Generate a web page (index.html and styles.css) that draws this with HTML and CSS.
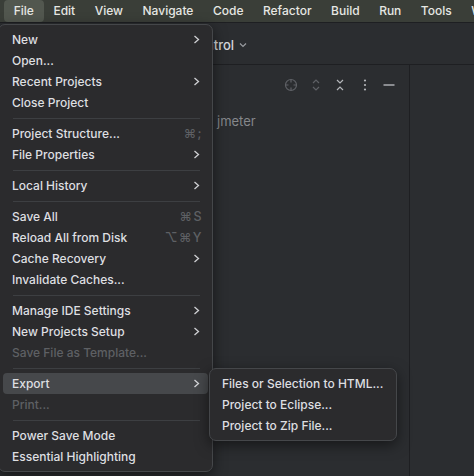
FILE: index.html
```html
<!DOCTYPE html>
<html>
<head>
<meta charset="utf-8">
<link rel="stylesheet" href="styles.css">
</head>
<body>
<div class="menubar">
  <span class="mb-item active">File</span>
  <span class="mb-item">Edit</span>
  <span class="mb-item">View</span>
  <span class="mb-item">Navigate</span>
  <span class="mb-item">Code</span>
  <span class="mb-item">Refactor</span>
  <span class="mb-item">Build</span>
  <span class="mb-item">Run</span>
  <span class="mb-item">Tools</span>
  <span class="mb-item">Window</span>
</div>
<div class="ide">
  <div class="toolbar">
    <span class="vcs">Version Control <svg class="chev-down" width="10" height="10" viewBox="0 0 10 10"><path d="M2 3.5 L5 6.5 L8 3.5" fill="none" stroke="#9a9ca0" stroke-width="1.2"/></svg></span>
  </div>
  <div class="panels">
    <div class="project">
      <div class="proj-head">
        <svg width="14" height="14" viewBox="0 0 14 14"><circle cx="7" cy="7" r="5.5" fill="none" stroke="#5f6166" stroke-width="1.2"/><path d="M7 1.5V4.5M7 9.5V12.5M1.5 7H4.5M9.5 7H12.5" stroke="#5f6166" stroke-width="1.2"/></svg>
        <svg width="14" height="14" viewBox="0 0 14 14"><path d="M4 5 L7 2 L10 5M4 9 L7 12 L10 9" fill="none" stroke="#5f6166" stroke-width="1.2"/></svg>
        <svg width="14" height="14" viewBox="0 0 14 14"><path d="M4 2 L7 5 L10 2M4 12 L7 9 L10 12" fill="none" stroke="#b4b6ba" stroke-width="1.2"/></svg>
        <svg width="14" height="14" viewBox="0 0 14 14"><circle cx="7" cy="2.5" r="1.1" fill="#b4b6ba"/><circle cx="7" cy="7" r="1.1" fill="#b4b6ba"/><circle cx="7" cy="11.5" r="1.1" fill="#b4b6ba"/></svg>
        <svg width="14" height="14" viewBox="0 0 14 14"><path d="M1.5 7H12.5" stroke="#b4b6ba" stroke-width="1.4"/></svg>
      </div>
      <div class="proj-row">jmeter</div>
    </div>
    <div class="side"></div>
  </div>
</div>

<div class="menu file-menu">
  <div class="mi"><span>New</span><svg class="arrow" width="7" height="9" viewBox="0 0 7 9"><path d="M1.5 1 L5.5 4.5 L1.5 8" fill="none" stroke="#cfd0d3" stroke-width="1.3"/></svg></div>
  <div class="mi"><span>Open...</span></div>
  <div class="mi"><span>Recent Projects</span><svg class="arrow" width="7" height="9" viewBox="0 0 7 9"><path d="M1.5 1 L5.5 4.5 L1.5 8" fill="none" stroke="#cfd0d3" stroke-width="1.3"/></svg></div>
  <div class="mi"><span>Close Project</span></div>
  <div class="sep"></div>
  <div class="mi"><span>Project Structure...</span><span class="sc">⌘;</span></div>
  <div class="mi"><span>File Properties</span><svg class="arrow" width="7" height="9" viewBox="0 0 7 9"><path d="M1.5 1 L5.5 4.5 L1.5 8" fill="none" stroke="#cfd0d3" stroke-width="1.3"/></svg></div>
  <div class="sep"></div>
  <div class="mi"><span>Local History</span><svg class="arrow" width="7" height="9" viewBox="0 0 7 9"><path d="M1.5 1 L5.5 4.5 L1.5 8" fill="none" stroke="#cfd0d3" stroke-width="1.3"/></svg></div>
  <div class="sep"></div>
  <div class="mi"><span>Save All</span><span class="sc">⌘S</span></div>
  <div class="mi"><span>Reload All from Disk</span><span class="sc">⌥⌘Y</span></div>
  <div class="mi"><span>Cache Recovery</span><svg class="arrow" width="7" height="9" viewBox="0 0 7 9"><path d="M1.5 1 L5.5 4.5 L1.5 8" fill="none" stroke="#cfd0d3" stroke-width="1.3"/></svg></div>
  <div class="mi"><span>Invalidate Caches...</span></div>
  <div class="sep"></div>
  <div class="mi"><span>Manage IDE Settings</span><svg class="arrow" width="7" height="9" viewBox="0 0 7 9"><path d="M1.5 1 L5.5 4.5 L1.5 8" fill="none" stroke="#cfd0d3" stroke-width="1.3"/></svg></div>
  <div class="mi"><span>New Projects Setup</span><svg class="arrow" width="7" height="9" viewBox="0 0 7 9"><path d="M1.5 1 L5.5 4.5 L1.5 8" fill="none" stroke="#cfd0d3" stroke-width="1.3"/></svg></div>
  <div class="mi disabled"><span>Save File as Template...</span></div>
  <div class="sep"></div>
  <div class="mi selected"><span>Export</span><svg class="arrow" width="7" height="9" viewBox="0 0 7 9"><path d="M1.5 1 L5.5 4.5 L1.5 8" fill="none" stroke="#d6d7da" stroke-width="1.3"/></svg></div>
  <div class="mi disabled"><span>Print...</span></div>
  <div class="sep"></div>
  <div class="mi"><span>Power Save Mode</span></div>
  <div class="mi"><span>Essential Highlighting</span></div>
</div>

<div class="menu sub-menu">
  <div class="mi"><span>Files or Selection to HTML...</span></div>
  <div class="mi"><span>Project to Eclipse...</span></div>
  <div class="mi"><span>Project to Zip File...</span></div>
</div>
</body>
</html>
```
FILE: styles.css
```css
* { box-sizing: border-box; }
html, body {
  margin: 0;
  padding: 0;
  width: 474px;
  height: 476px;
  overflow: hidden;
  background: #2b2d30;
  font-family: Inter, "Noto Sans", sans-serif;
  color: #dfe1e5;
}
.menubar {
  height: 23px;
  background: #3a3e38;
  border-bottom: 1px solid #1e1f22;
  display: flex;
  align-items: center;
  padding-left: 4px;
  white-space: nowrap;
  font-size: 12px;
  font-weight: 500;
  color: #e6e7e3;
}
.mb-item {
  padding: 0 9.75px;
  height: 22px;
  line-height: 22px;
  border-radius: 4px;
}
.mb-item.active {
  background: #52574f;
}
.ide {
  display: flex;
  flex-direction: column;
  height: 453px;
}
.toolbar {
  height: 42px;
  background: #2b2d30;
  border-bottom: 1px solid #1e1f22;
  display: flex;
  align-items: center;
  padding-left: 138px;
  padding-top: 2px;
  font-size: 13px;
  font-weight: 500;
  color: #d5d7da;
}
.vcs { display: flex; align-items: center; gap: 4px; }
.panels {
  flex: 1;
  display: flex;
}
.project {
  width: 410px;
  border-right: 1px solid #1e1f22;
  background: #2b2d30;
}
.proj-head {
  height: 40px;
  display: flex;
  align-items: center;
  justify-content: flex-end;
  gap: 10.5px;
  padding-right: 13px;
}
.proj-row {
  padding-left: 217px;
  padding-top: 8px;
  font-size: 13px;
  color: #85878b;
}
.side { flex: 1; background: #2b2d30; }

.menu {
  position: absolute;
  background: #2b2b2d;
  border: 1px solid #45474a;
  border-radius: 7px;
  box-shadow: 0 4px 14px rgba(0,0,0,0.5);
  font-size: 12px;
  font-weight: 500;
  color: #dedfe1;
  padding: 4px 4px;
}
.file-menu {
  left: -2px;
  top: 24px;
  width: 215px;
  height: 448px;
}
.sub-menu {
  left: 209px;
  top: 368px;
  width: 188px;
  padding: 4px 4px;
}
.mi {
  height: 21px;
  display: flex;
  align-items: center;
  justify-content: space-between;
  padding: 0 8px;
  border-radius: 4px;
  white-space: nowrap;
}
.file-menu .mi { padding-left: 9px; padding-right: 8px; }
.mi.selected { background: #46484b; }
.mi.disabled { color: #5e6064; }
.arrow { display: block; }
.sc {
  color: #5e6064;
  font-size: 12.5px;
  letter-spacing: 1.5px;
  margin-right: -3px;
}
.sep {
  height: 1px;
  background: #3d3f42;
  margin: 4.5px 8px 4.5px 10px;
}
```
